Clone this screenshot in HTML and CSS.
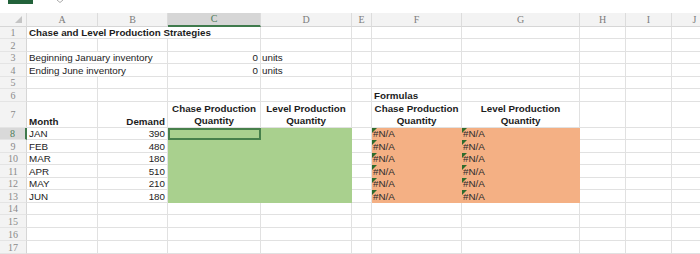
FILE: index.html
```html
<!DOCTYPE html>
<html lang="en">
  <head>
    <meta charset="UTF-8" />
    <meta name="viewport" content="width=device-width, initial-scale=1.0" />
    <title>Production Strategies</title>

    <link rel="stylesheet" href="styles.css">
  </head>
  <body>
    <div class="topbar">
      <svg class="app-icon" width="80" height="13" viewBox="0 0 80 13">
        <rect x="8" y="0" width="25" height="4" fill="#22623a" />
        <path d="M57 0 L60 2.5 L63 0" fill="none" stroke="#a9a9a9" stroke-width="1" />
      </svg>
    </div>

    <table class="sheet">
      <colgroup>
        <col class="c-head" />
        <col class="c-a" />
        <col class="c-b" />
        <col class="c-c" />
        <col class="c-d" />
        <col class="c-e" />
        <col class="c-f" />
        <col class="c-g" />
        <col class="c-h" />
        <col class="c-i" />
        <col class="c-j" />
      </colgroup>
      <thead>
        <tr class="col-letters">
          <th class="corner"><span class="corner-mark"></span></th>
          <th>A</th>
          <th>B</th>
          <th class="active-col">C</th>
          <th>D</th>
          <th>E</th>
          <th>F</th>
          <th>G</th>
          <th>H</th>
          <th>I</th>
          <th>J</th>
        </tr>
      </thead>
      <tbody>
        <tr class="h12">
          <th>1</th>
          <td colspan="3" class="bold">Chase and Level Production Strategies</td>
          <td></td><td></td><td></td><td></td><td></td><td></td><td></td>
        </tr>
        <tr class="h13">
          <th>2</th>
          <td></td><td></td><td></td><td></td><td></td><td></td><td></td><td></td><td></td><td></td>
        </tr>
        <tr class="h12">
          <th>3</th>
          <td colspan="2">Beginning January inventory</td>
          <td class="num">0</td>
          <td class="unit">units</td>
          <td></td><td></td><td></td><td></td><td></td><td></td>
        </tr>
        <tr class="h13">
          <th>4</th>
          <td colspan="2">Ending June inventory</td>
          <td class="num">0</td>
          <td class="unit">units</td>
          <td></td><td></td><td></td><td></td><td></td><td></td>
        </tr>
        <tr class="h12">
          <th>5</th>
          <td></td><td></td><td></td><td></td><td></td><td></td><td></td><td></td><td></td><td></td>
        </tr>
        <tr class="h13">
          <th>6</th>
          <td></td><td></td><td></td><td></td><td></td>
          <td class="bold">Formulas</td>
          <td></td><td></td><td></td><td></td>
        </tr>
        <tr class="h26">
          <th>7</th>
          <td class="bold">Month</td>
          <td class="bold num">Demand</td>
          <td class="bold wrap">Chase Production Quantity</td>
          <td class="bold wrap">Level Production Quantity</td>
          <td></td>
          <td class="bold wrap">Chase Production Quantity</td>
          <td class="bold wrap">Level Production Quantity</td>
          <td></td><td></td><td></td>
        </tr>
        <tr class="h12">
          <th class="active-row">8</th>
          <td>JAN</td>
          <td class="num">390</td>
          <td class="fill-green selected"></td>
          <td class="fill-green"></td>
          <td></td>
          <td class="fill-orange err">#N/A</td>
          <td class="fill-orange err">#N/A</td>
          <td></td><td></td><td></td>
        </tr>
        <tr class="h13">
          <th>9</th>
          <td>FEB</td>
          <td class="num">480</td>
          <td class="fill-green"></td>
          <td class="fill-green"></td>
          <td></td>
          <td class="fill-orange err">#N/A</td>
          <td class="fill-orange err">#N/A</td>
          <td></td><td></td><td></td>
        </tr>
        <tr class="h12">
          <th>10</th>
          <td>MAR</td>
          <td class="num">180</td>
          <td class="fill-green"></td>
          <td class="fill-green"></td>
          <td></td>
          <td class="fill-orange err">#N/A</td>
          <td class="fill-orange err">#N/A</td>
          <td></td><td></td><td></td>
        </tr>
        <tr class="h13">
          <th>11</th>
          <td>APR</td>
          <td class="num">510</td>
          <td class="fill-green"></td>
          <td class="fill-green"></td>
          <td></td>
          <td class="fill-orange err">#N/A</td>
          <td class="fill-orange err">#N/A</td>
          <td></td><td></td><td></td>
        </tr>
        <tr class="h12">
          <th>12</th>
          <td>MAY</td>
          <td class="num">210</td>
          <td class="fill-green"></td>
          <td class="fill-green"></td>
          <td></td>
          <td class="fill-orange err">#N/A</td>
          <td class="fill-orange err">#N/A</td>
          <td></td><td></td><td></td>
        </tr>
        <tr class="h13">
          <th>13</th>
          <td>JUN</td>
          <td class="num">180</td>
          <td class="fill-green"></td>
          <td class="fill-green"></td>
          <td></td>
          <td class="fill-orange err">#N/A</td>
          <td class="fill-orange err">#N/A</td>
          <td></td><td></td><td></td>
        </tr>
        <tr class="h12">
          <th>14</th>
          <td></td><td></td><td></td><td></td><td></td><td></td><td></td><td></td><td></td><td></td>
        </tr>
        <tr class="h13">
          <th>15</th>
          <td></td><td></td><td></td><td></td><td></td><td></td><td></td><td></td><td></td><td></td>
        </tr>
        <tr class="h13">
          <th>16</th>
          <td></td><td></td><td></td><td></td><td></td><td></td><td></td><td></td><td></td><td></td>
        </tr>
        <tr class="h13">
          <th>17</th>
          <td></td><td></td><td></td><td></td><td></td><td></td><td></td><td></td><td></td><td></td>
        </tr>
      </tbody>
    </table>
  </body>
</html>
```

FILE: styles.css
```css
* {
  margin: 0;
  padding: 0;
  box-sizing: border-box;
}
body {
  background-color: #fff;
  overflow: hidden;
  font-family: "Liberation Sans", Arial, sans-serif;
  color: #1c1c1c;
}

.topbar {
  height: 13px;
  background: #fff;
}
.app-icon {
  display: block;
}

.sheet {
  table-layout: fixed;
  width: 718px;
  border-collapse: separate;
  border-spacing: 0;
  font-size: 9.8px;
}

.c-head { width: 27px; }
.c-a { width: 71px; }
.c-b { width: 70px; }
.c-c { width: 93px; }
.c-d { width: 91px; }
.c-e { width: 20px; }
.c-f { width: 90px; }
.c-g { width: 118px; }
.c-h { width: 46px; }
.c-i { width: 46px; }
.c-j { width: 46px; }

/* column letters */
.col-letters th {
  height: 13px;
  background: #f3f3f3;
  border-right: 1px solid #dcdcdc;
  border-bottom: 1px solid #d6d6d6;
  font-family: "Liberation Serif", "Times New Roman", serif;
  font-weight: normal;
  font-size: 10px;
  color: #7c7c7c;
  text-align: center;
  vertical-align: middle;
  line-height: 12px;
}
.col-letters th.active-col {
  background: #d6d6d6;
  border-bottom: 2px solid #3f7a4c;
  color: #4d7a59;
}
.col-letters th.corner {
  position: relative;
}
.corner-mark {
  position: absolute;
  right: 4px;
  bottom: 3px;
  width: 0;
  height: 0;
  border-left: 7px solid transparent;
  border-bottom: 7px solid #c4c4c4;
}

/* row numbers */
tbody th {
  background: #f3f3f3;
  border-right: 1px solid #d6d6d6;
  border-bottom: 1px solid #e4e4e4;
  font-family: "Liberation Serif", "Times New Roman", serif;
  font-weight: normal;
  font-size: 10px;
  color: #8a8a8a;
  text-align: center;
  vertical-align: middle;
  line-height: 11px;
}
tbody th.active-row {
  background: #d9d9d9;
  border-right: 2px solid #3f7a4c;
  color: #4d7a59;
}

.h12 { height: 12px; }
.h13 { height: 13px; }
.h26 { height: 26px; }

td {
  border-right: 1px solid #e1e1e1;
  border-bottom: 1px solid #e1e1e1;
  padding: 0 2px;
  line-height: 11px;
  vertical-align: bottom;
  white-space: nowrap;
  overflow: visible;
}
td.bold {
  font-weight: bold;
}
td.num {
  text-align: right;
}
td.unit {
  padding-left: 1px;
}
td.wrap {
  white-space: normal;
  text-align: center;
  line-height: 12px;
}

.fill-green {
  background: #a9d08e;
  border-color: #a9d08e;
}
.fill-orange {
  background: #f4b084;
  border-color: #f4b084;
  color: #2a2a2a;
}

.selected {
  outline: 2px solid #47804b;
  outline-offset: -2px;
}

.err {
  position: relative;
  padding-left: 1px;
}
.err::before {
  content: "";
  position: absolute;
  left: 0;
  top: 0;
  width: 0;
  height: 0;
  border-top: 5px solid #2f6b2c;
  border-right: 5px solid transparent;
}
```
